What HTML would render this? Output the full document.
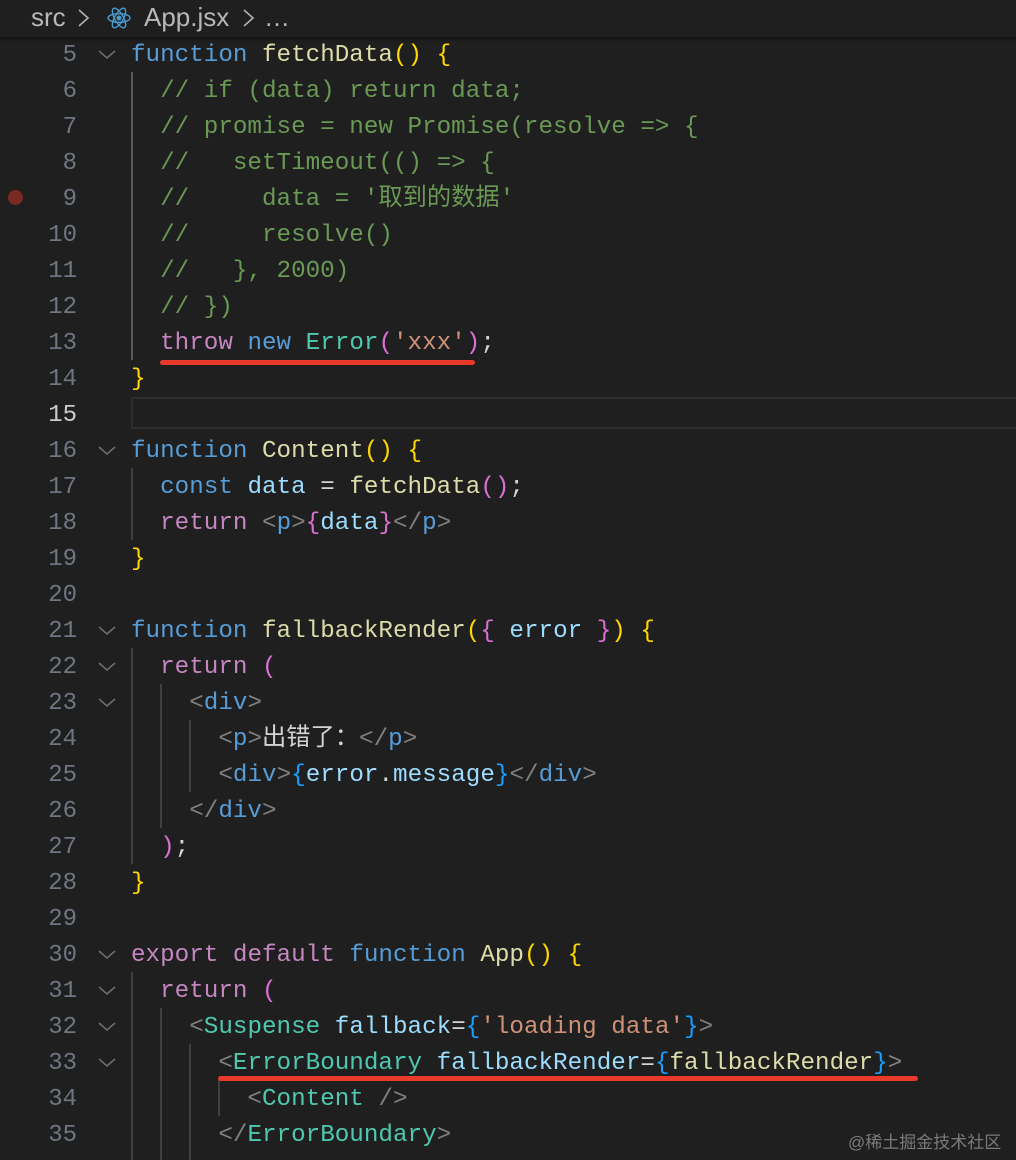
<!DOCTYPE html>
<html><head><meta charset="utf-8">
<style>
html,body{margin:0;padding:0;background:#1f1f1f;width:1016px;height:1160px;overflow:hidden;}
.bc{position:absolute;left:0;top:0;width:1016px;height:37px;background:#1f1f1f;box-shadow:0 2px 3px rgba(0,0,0,0.45);font-family:"Liberation Sans",sans-serif;font-size:26px;color:#b8b8b8;z-index:3}
.bc span{position:absolute;top:2px}
.ln{position:absolute;left:0;width:77px;text-align:right;font-family:"Liberation Mono",monospace;font-size:24px;color:#6e7681;line-height:36px;height:36px;padding-top:2px}
.ln.cur{color:#cccccc}
.code{position:absolute;left:131px;white-space:pre;font-family:"Liberation Mono","Noto Sans CJK SC",monospace;font-size:24.25px;line-height:36px;height:36px;color:#d4d4d4;padding-top:2px}
.g{position:absolute;width:2px;background:#404040}
.k{color:#569cd6}.f{color:#dcdcaa}.c{color:#6a9955}.y{color:#ffd700}.p{color:#c586c0}.o{color:#da70d6}.b{color:#179fff}
.s{color:#ce9178}.t{color:#4ec9b0}.v{color:#9cdcfe}.a{color:#808080}.w{color:#d4d4d4}
.red{position:absolute;height:5px;background:#e8392a;border-radius:3px}
</style></head><body>
<div class="bc"><span style="left:31px">src</span>
<svg style="position:absolute;left:76px;top:8px" width="16" height="20" fill="none" stroke="#b0b0b0" stroke-width="1.6"><path d="M3 2 L12 10 L3 18"/></svg>
<svg style="position:absolute;left:106px;top:5px" width="26" height="26" viewBox="0 0 26 26" fill="none" stroke="#4a9bd0" stroke-width="1.4"><ellipse cx="13" cy="13" rx="11" ry="4.3"/><ellipse cx="13" cy="13" rx="11" ry="4.3" transform="rotate(60 13 13)"/><ellipse cx="13" cy="13" rx="11" ry="4.3" transform="rotate(-60 13 13)"/><circle cx="13" cy="13" r="1.8" fill="#4a9bd0"/></svg>
<span style="left:144px">App.jsx</span>
<svg style="position:absolute;left:241px;top:8px" width="16" height="20" fill="none" stroke="#b0b0b0" stroke-width="1.6"><path d="M3 2 L12 10 L3 18"/></svg>
<span style="left:264px">…</span></div>

<div class="g" style="left:131px;top:72px;height:288px;background:#585858"></div>
<div class="g" style="left:131px;top:468px;height:72px"></div>
<div class="g" style="left:131px;top:648px;height:216px"></div>
<div class="g" style="left:160px;top:684px;height:144px"></div>
<div class="g" style="left:189px;top:720px;height:72px"></div>
<div class="g" style="left:131px;top:972px;height:188px"></div>
<div class="g" style="left:160px;top:1008px;height:152px"></div>
<div class="g" style="left:189px;top:1044px;height:116px"></div>
<div class="g" style="left:218px;top:1080px;height:36px"></div>

<div style="position:absolute;left:131px;top:397px;width:900px;height:32px;border:2px solid #2d2d2d;box-sizing:border-box"></div>
<div style="position:absolute;left:8px;top:190px;width:15px;height:15px;border-radius:50%;background:#7a2a22"></div>

<div class="ln" style="top:36px">5</div><div class="code" style="top:36px"><span class="k">function</span> <span class="f">fetchData</span><span class="y">()</span> <span class="y">{</span></div>
<div class="ln" style="top:72px">6</div><div class="code" style="top:72px">  <span class="c">// if (data) return data;</span></div>
<div class="ln" style="top:108px">7</div><div class="code" style="top:108px">  <span class="c">// promise = new Promise(resolve =&gt; {</span></div>
<div class="ln" style="top:144px">8</div><div class="code" style="top:144px">  <span class="c">//   setTimeout(() =&gt; {</span></div>
<div class="ln" style="top:180px">9</div><div class="code" style="top:180px">  <span class="c">//     data = '取到的数据'</span></div>
<div class="ln" style="top:216px">10</div><div class="code" style="top:216px">  <span class="c">//     resolve()</span></div>
<div class="ln" style="top:252px">11</div><div class="code" style="top:252px">  <span class="c">//   }, 2000)</span></div>
<div class="ln" style="top:288px">12</div><div class="code" style="top:288px">  <span class="c">// })</span></div>
<div class="ln" style="top:324px">13</div><div class="code" style="top:324px">  <span class="p">throw</span> <span class="k">new</span> <span class="t">Error</span><span class="o">(</span><span class="s">'xxx'</span><span class="o">)</span>;</div>
<div class="ln" style="top:360px">14</div><div class="code" style="top:360px"><span class="y">}</span></div>
<div class="ln cur" style="top:396px">15</div>
<div class="ln" style="top:432px">16</div><div class="code" style="top:432px"><span class="k">function</span> <span class="f">Content</span><span class="y">()</span> <span class="y">{</span></div>
<div class="ln" style="top:468px">17</div><div class="code" style="top:468px">  <span class="k">const</span> <span class="v">data</span> = <span class="f">fetchData</span><span class="o">()</span>;</div>
<div class="ln" style="top:504px">18</div><div class="code" style="top:504px">  <span class="p">return</span> <span class="a">&lt;</span><span class="k">p</span><span class="a">&gt;</span><span class="o">{</span><span class="v">data</span><span class="o">}</span><span class="a">&lt;/</span><span class="k">p</span><span class="a">&gt;</span></div>
<div class="ln" style="top:540px">19</div><div class="code" style="top:540px"><span class="y">}</span></div>
<div class="ln" style="top:576px">20</div>
<div class="ln" style="top:612px">21</div><div class="code" style="top:612px"><span class="k">function</span> <span class="f">fallbackRender</span><span class="y">(</span><span class="o">{</span> <span class="v">error</span> <span class="o">}</span><span class="y">)</span> <span class="y">{</span></div>
<div class="ln" style="top:648px">22</div><div class="code" style="top:648px">  <span class="p">return</span> <span class="o">(</span></div>
<div class="ln" style="top:684px">23</div><div class="code" style="top:684px">    <span class="a">&lt;</span><span class="k">div</span><span class="a">&gt;</span></div>
<div class="ln" style="top:720px">24</div><div class="code" style="top:720px">      <span class="a">&lt;</span><span class="k">p</span><span class="a">&gt;</span>出错了：<span class="a">&lt;/</span><span class="k">p</span><span class="a">&gt;</span></div>
<div class="ln" style="top:756px">25</div><div class="code" style="top:756px">      <span class="a">&lt;</span><span class="k">div</span><span class="a">&gt;</span><span class="b">{</span><span class="v">error</span>.<span class="v">message</span><span class="b">}</span><span class="a">&lt;/</span><span class="k">div</span><span class="a">&gt;</span></div>
<div class="ln" style="top:792px">26</div><div class="code" style="top:792px">    <span class="a">&lt;/</span><span class="k">div</span><span class="a">&gt;</span></div>
<div class="ln" style="top:828px">27</div><div class="code" style="top:828px">  <span class="o">)</span>;</div>
<div class="ln" style="top:864px">28</div><div class="code" style="top:864px"><span class="y">}</span></div>
<div class="ln" style="top:900px">29</div>
<div class="ln" style="top:936px">30</div><div class="code" style="top:936px"><span class="p">export</span> <span class="p">default</span> <span class="k">function</span> <span class="f">App</span><span class="y">()</span> <span class="y">{</span></div>
<div class="ln" style="top:972px">31</div><div class="code" style="top:972px">  <span class="p">return</span> <span class="o">(</span></div>
<div class="ln" style="top:1008px">32</div><div class="code" style="top:1008px">    <span class="a">&lt;</span><span class="t">Suspense</span> <span class="v">fallback</span>=<span class="b">{</span><span class="s">'loading data'</span><span class="b">}</span><span class="a">&gt;</span></div>
<div class="ln" style="top:1044px">33</div><div class="code" style="top:1044px">      <span class="a">&lt;</span><span class="t">ErrorBoundary</span> <span class="v">fallbackRender</span>=<span class="b">{</span><span class="f">fallbackRender</span><span class="b">}</span><span class="a">&gt;</span></div>
<div class="ln" style="top:1080px">34</div><div class="code" style="top:1080px">        <span class="a">&lt;</span><span class="t">Content</span> <span class="a">/&gt;</span></div>
<div class="ln" style="top:1116px">35</div><div class="code" style="top:1116px">      <span class="a">&lt;/</span><span class="t">ErrorBoundary</span><span class="a">&gt;</span></div>

<svg style="position:absolute;left:0;top:0" width="1016" height="1160">
<g fill="none" stroke="#6e6e6e" stroke-width="1.5">
<path d="M99 51 l8 7 l8 -7"/><path d="M99 447 l8 7 l8 -7"/><path d="M99 627 l8 7 l8 -7"/><path d="M99 663 l8 7 l8 -7"/><path d="M99 699 l8 7 l8 -7"/><path d="M99 951 l8 7 l8 -7"/><path d="M99 987 l8 7 l8 -7"/><path d="M99 1023 l8 7 l8 -7"/><path d="M99 1059 l8 7 l8 -7"/>
</g></svg>

<div class="red" style="left:160px;top:360px;width:315px"></div>
<div class="red" style="left:218px;top:1076px;width:700px"></div>

<div style="position:absolute;left:848px;top:1128px;font-family:'Liberation Sans','Noto Sans CJK SC',sans-serif;font-size:17px;color:#7a7a7a">@稀土掘金技术社区</div>
</body></html>
